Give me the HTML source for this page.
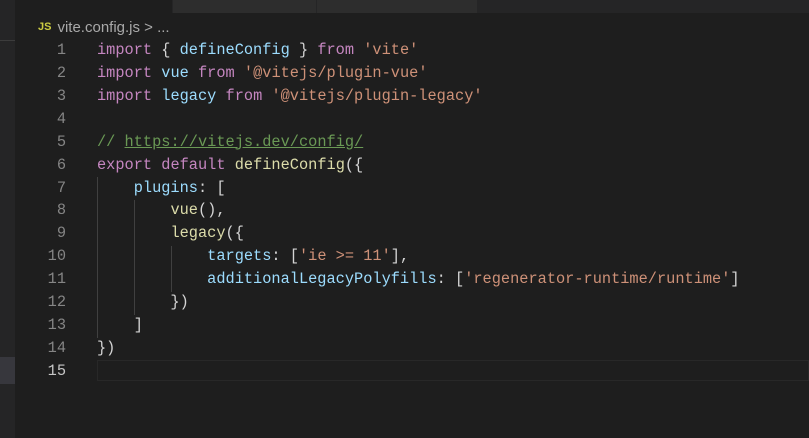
<!DOCTYPE html>
<html><head><meta charset="utf-8"><style>
html,body{margin:0;padding:0;width:809px;height:438px;overflow:hidden;background:#1e1e1e;}
.side{position:absolute;left:0;top:0;width:15px;height:438px;background:#252526;}
.side .ln{position:absolute;left:0;top:40px;width:15px;height:1px;background:#3c3c3c;}
.side .hl{position:absolute;left:0;top:357px;width:15px;height:27px;background:#37373d;}
.tabs{position:absolute;left:15px;top:0;width:794px;height:13px;background:#252526;}
.tab{position:absolute;top:0;height:13px;background:#2d2d2d;}
.crumb{position:absolute;left:38px;top:19px;font:15px "Liberation Sans",sans-serif;color:#a9a9a9;white-space:pre;}
.crumb b{color:#cbcb41;font-size:11px;font-weight:bold;margin-right:6px;position:relative;top:-2px;}
.code{position:absolute;left:0;top:39px;width:809px;font:15.3px/22.93px "Liberation Mono",monospace;}
.row{position:relative;height:22.93px;}
.num{position:absolute;left:15px;width:51px;text-align:right;color:#858585;}
.txt{position:absolute;left:97px;color:#d4d4d4;white-space:pre;}
.k{color:#c586c0}.v{color:#9cdcfe}.f{color:#dcdcaa}.s{color:#ce9178}.c{color:#6a9955}
.g{position:absolute;width:1px;background:#404040;}
.cur{position:absolute;left:97px;top:360px;width:712px;height:21px;border:1px solid #282828;box-sizing:border-box;}
</style></head><body>
<div class="side"><div class="ln"></div><div class="hl"></div></div>
<div class="tabs">
<div class="tab" style="left:0;width:157px;background:#1e1e1e"></div>
<div class="tab" style="left:158px;width:143px"></div>
<div class="tab" style="left:302px;width:160px"></div>
</div>
<div class="crumb"><b>JS</b>vite.config.js &gt; ...</div>
<div class="cur"></div>
<div class="g" style="left:97px;top:177px;height:161px"></div>
<div class="g" style="left:134px;top:200px;height:115px"></div>
<div class="g" style="left:171px;top:246px;height:46px"></div>
<div class="code"><div class="row"><span class="num">1</span><span class="txt"><span class="k">import</span> { <span class="v">defineConfig</span> } <span class="k">from</span> <span class="s">'vite'</span></span></div><div class="row"><span class="num">2</span><span class="txt"><span class="k">import</span> <span class="v">vue</span> <span class="k">from</span> <span class="s">'@vitejs/plugin-vue'</span></span></div><div class="row"><span class="num">3</span><span class="txt"><span class="k">import</span> <span class="v">legacy</span> <span class="k">from</span> <span class="s">'@vitejs/plugin-legacy'</span></span></div><div class="row"><span class="num">4</span></div><div class="row"><span class="num">5</span><span class="txt c">// <span style="text-decoration:underline">https://vitejs.dev/config/</span></span></div><div class="row"><span class="num">6</span><span class="txt"><span class="k">export</span> <span class="k">default</span> <span class="f">defineConfig</span>({</span></div><div class="row"><span class="num">7</span><span class="txt">    <span class="v">plugins</span>: [</span></div><div class="row"><span class="num">8</span><span class="txt">        <span class="f">vue</span>(),</span></div><div class="row"><span class="num">9</span><span class="txt">        <span class="f">legacy</span>({</span></div><div class="row"><span class="num">10</span><span class="txt">            <span class="v">targets</span>: [<span class="s">'ie &gt;= 11'</span>],</span></div><div class="row"><span class="num">11</span><span class="txt">            <span class="v">additionalLegacyPolyfills</span>: [<span class="s">'regenerator-runtime/runtime'</span>]</span></div><div class="row"><span class="num">12</span><span class="txt">        })</span></div><div class="row"><span class="num">13</span><span class="txt">    ]</span></div><div class="row"><span class="num">14</span><span class="txt">})</span></div><div class="row"><span class="num" style="color:#c6c6c6">15</span></div></div>
</body></html>
